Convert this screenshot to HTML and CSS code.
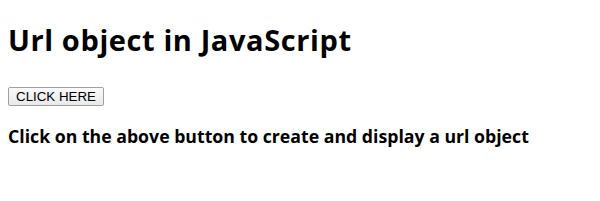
FILE: index.html
```html
<!DOCTYPE html>
<html lang="en">
<head>
    <meta charset="UTF-8">
    <title>Url object in JavaScript</title>
    <link rel="stylesheet" href="styles.css">
</head>
<body>
    <h1>Url object in JavaScript</h1>
    <div class="actions">
        <button class="btn">CLICK HERE</button>
    </div>
    <h3>Click on the above button to create and display a url object</h3>
    <div class="result"></div>
</body>
</html>
```

FILE: styles.css
```css
body {
    font-family: "Open Sans", "Noto Sans", sans-serif;
    color: #000;
    background: #fff;
    margin: 8px;
}

h1 {
    font-size: 29px;
    line-height: 1.2;
    letter-spacing: 0.6px;
    margin: 15px 0 29px;
}

.actions {
    display: flex;
}

h3 {
    font-size: 17.7px;
    line-height: 1.2;
    margin: 20px 0;
}

.btn {
    font-family: "Liberation Sans", Arial, sans-serif;
    font-size: 13.33px;
    height: 19px;
    padding: 0 7px;
    background: linear-gradient(#fafafa, #e9e9e9);
    border: 1px solid #a0a0a0;
    border-radius: 2px;
    color: #000;
}
```
